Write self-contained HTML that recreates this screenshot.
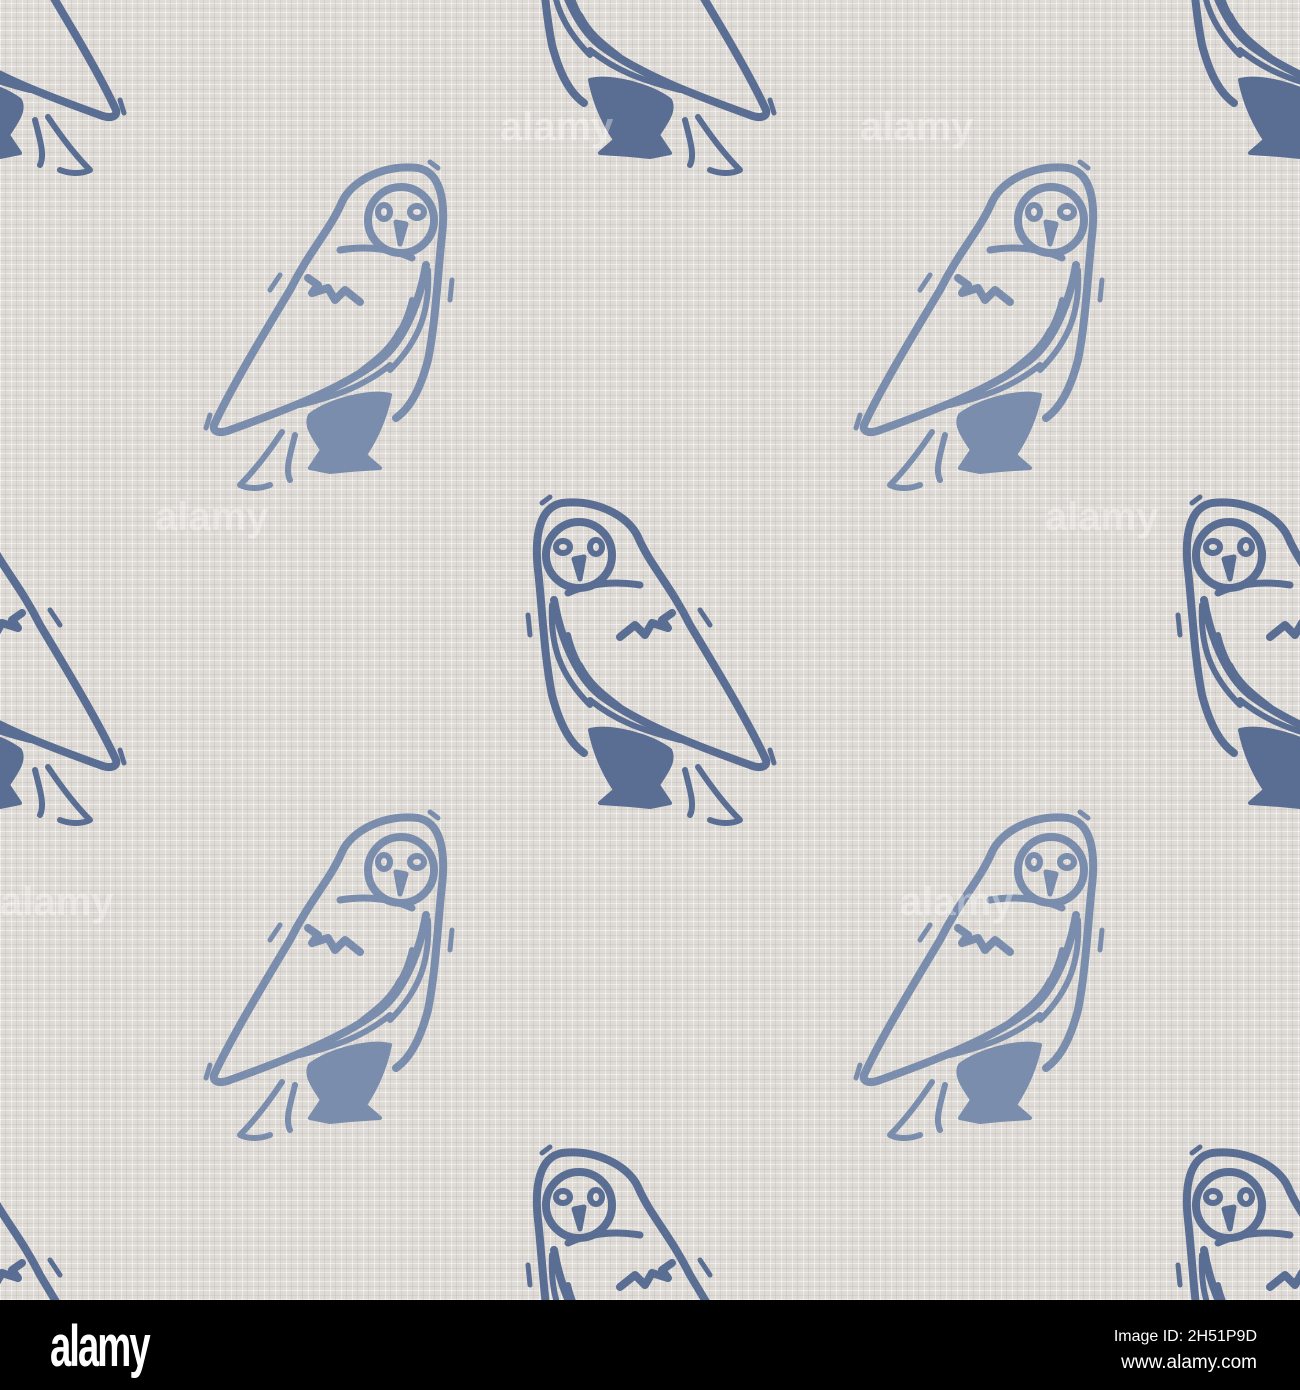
<!DOCTYPE html>
<html><head><meta charset="utf-8"><style>
html,body{margin:0;padding:0;width:1300px;height:1390px;overflow:hidden;background:#000}
#pat{position:absolute;left:0;top:0;width:1300px;height:1300px;background-color:#dedad5;
background-image:
repeating-linear-gradient(90deg,rgba(255,255,255,.45) 0 1px,transparent 1px 5px,rgba(170,160,155,.2) 5px 6px,transparent 6px 11px),
repeating-linear-gradient(0deg,rgba(255,255,255,.45) 0 1px,transparent 1px 4px,rgba(170,160,155,.2) 4px 5px,transparent 5px 9px);}
svg{position:absolute;left:0;top:0}
#bar{position:absolute;left:0;top:1300px;width:1300px;height:90px;background:#000;overflow:hidden}
#logo{position:absolute;left:50px;top:18px;color:#fff;font:bold 58px/1 "Liberation Sans Narrow","Liberation Sans",sans-serif;letter-spacing:-3px;transform:scaleX(.66);transform-origin:left}
#id{position:absolute;right:43px;top:24px;color:#fff;font:16px/26px "Liberation Sans Narrow","Liberation Sans",sans-serif;text-align:right}
#id b{font-size:19px;font-weight:normal}
</style></head><body>
<div id="pat"></div>
<svg width="1300" height="1300" viewBox="0 0 1300 1300">
<defs>
<g id="owl" fill="none" stroke-linecap="round" stroke-linejoin="round">
 <path d="M142,52 C152,30 185,14 218,18 C240,22 246,50 242,85 C238,120 236,170 228,210 C220,240 210,258 196,268" stroke-width="8"/>
 <path d="M142,52 C130,80 110,100 90,140 C60,190 30,240 14,275 C12,282 20,284 30,280 C80,262 140,240 180,210 C205,190 220,150 226,115" stroke-width="8"/>
 <path d="M140,100 C170,95 195,100 212,108" stroke-width="7"/>
 <circle cx="201" cy="70" r="33" stroke-width="8"/>
 <ellipse cx="184" cy="62" rx="6" ry="7" stroke-width="6"/>
 <ellipse cx="217" cy="62" rx="7" ry="6" stroke-width="6"/>
 <path d="M196,72 L200,94 L206,74 Z" stroke-width="5" fill="currentColor"/>
 <path d="M108,128 L118,135 L112,143 L128,138 L135,150 L145,140 L160,152" stroke-width="8"/>
 <path d="M228,120 C230,160 220,190 190,220 M212,150 C205,180 190,200 165,220 M200,180 C190,200 175,210 160,222 M100,255 C140,245 165,235 190,215" stroke-width="6"/>
 <path d="M110,265 C130,250 170,240 190,245 C185,270 175,290 165,305 L180,318 L150,320 L130,322 L110,318 L122,300 C112,285 105,275 110,265Z" stroke-width="4" fill="currentColor"/>
 <path d="M82,282 C70,300 55,320 40,335 C50,340 62,338 70,335 M95,285 C90,305 85,320 90,330" stroke-width="6"/>
 <path d="M230,12 L238,18 M80,125 L70,140 M252,130 L250,150 M10,265 L6,278" stroke-width="5"/>
</g>
</defs>
<g color="#7b8dac" stroke="#7b8dac">
<use href="#owl" x="200" y="150"/><use href="#owl" x="850" y="150"/>
<use href="#owl" x="200" y="800"/><use href="#owl" x="850" y="800"/>
<use href="#owl" x="-450" y="150"/><use href="#owl" x="-450" y="800"/>
</g>
<g color="#5a6d93" stroke="#5a6d93">
<g transform="translate(780,485) scale(-1,1)"><use href="#owl"/></g>
<g transform="translate(1430,485) scale(-1,1)"><use href="#owl"/></g>
<g transform="translate(130,485) scale(-1,1)"><use href="#owl"/></g>
<g transform="translate(780,1135) scale(-1,1)"><use href="#owl"/></g>
<g transform="translate(1430,1135) scale(-1,1)"><use href="#owl"/></g>
<g transform="translate(130,1135) scale(-1,1)"><use href="#owl"/></g>
<g transform="translate(780,-165) scale(-1,1)"><use href="#owl"/></g>
<g transform="translate(1430,-165) scale(-1,1)"><use href="#owl"/></g>
<g transform="translate(130,-165) scale(-1,1)"><use href="#owl"/></g>
</g>
<g fill="#fff" opacity=".35" font-family="Liberation Sans" font-weight="bold" font-size="40">
<text x="155" y="530">alamy</text><text x="1045" y="530">alamy</text>
<text x="0" y="915">alamy</text><text x="900" y="915">alamy</text>
<text x="500" y="140">alamy</text><text x="860" y="140">alamy</text>
</g>
</svg>
<div id="bar"><div id="logo">alamy</div><div id="id">Image ID: 2H51P9D<br><b>www.alamy.com</b></div></div>
</body></html>
